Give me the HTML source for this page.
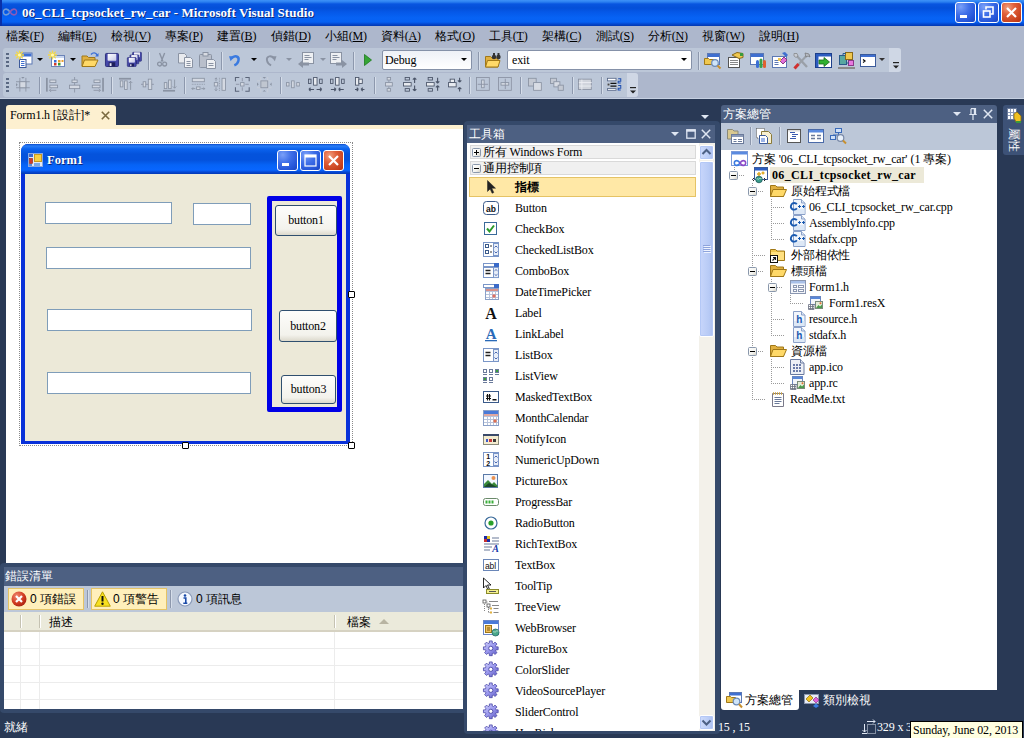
<!DOCTYPE html><html><head><meta charset="utf-8"><title>VS</title><style>
*{box-sizing:border-box}
html,body{margin:0;padding:0;overflow:hidden}
body{width:1024px;height:738px;position:relative;overflow:hidden;background:#293955;font-family:"Liberation Serif",serif;font-size:12px;line-height:14px;color:#000;letter-spacing:-0.15px}
.a{position:absolute}
.t{position:absolute;white-space:nowrap}
svg{position:absolute;overflow:visible}
.sep{position:absolute;width:1px;background:#8d98ad;box-shadow:1px 0 0 #d6deea}
.cap{position:absolute;background:#4d6082;color:#fff;height:18px}
.tb{position:absolute;background:#bcc7d8;border-radius:3px}
.grip{position:absolute;width:3px;height:15px;background:repeating-linear-gradient(#5a6882 0 2px,transparent 2px 4px)}
.txb{position:absolute;background:#fff;border:1px solid #7f9db9}
.btn{position:absolute;border:1px solid #2f4f6f;border-radius:3px;background:linear-gradient(#fdfdfb,#f3f2ec 80%,#dcd9cc);text-align:center}
.hd{position:absolute;width:7px;height:7px;background:#fff;border:1px solid #000;border-radius:1px}
.row{position:absolute;left:469px;width:228px;height:21px}
</style></head><body>
<svg width="0" height="0" style="left:0;top:0"><defs><linearGradient id="gg" x1="0" y1="0" x2="1" y2="1"><stop offset="0" stop-color="#d4d4ff"/><stop offset=".5" stop-color="#9a98ee"/><stop offset="1" stop-color="#5a57c0"/></linearGradient><linearGradient id="pmg" x1="0" y1="0" x2="1" y2="1"><stop offset="0" stop-color="#fff"/><stop offset=".6" stop-color="#f4f4f0"/><stop offset="1" stop-color="#d0ccc0"/></linearGradient></defs></svg>
<div class="a" id="title" style="left:0;top:0;width:1024px;height:26px;background:linear-gradient(#3f92f8 0,#2a7ff0 2px,#0855e0 4px,#044fd8 8px,#0558e8 12px,#0763f5 18px,#0661f2 22px,#0448d0 24px,#0338b0 26px)"></div>
<div class="t" style="left:22px;top:5px;font-weight:bold;font-size:13px;line-height:16px;color:#fff;letter-spacing:0.06px;text-shadow:1px 1px 0 #0a2a80">06_CLI_tcpsocket_rw_car - Microsoft Visual Studio</div>
<div class="a" style="left:955px;top:2px;width:21px;height:21px;border:1px solid #fff;border-radius:3px;background:radial-gradient(circle at 25% 20%,#7aa0f8 0,#3f6fe8 40%,#2555d8 75%,#1a45c0 100%)"><svg style="left:-1px;top:-1px" width="21" height="21"><rect x="5.0" y="13.0" width="7.0" height="3.0" fill="#fff"/></svg></div>
<div class="a" style="left:978px;top:2px;width:21px;height:21px;border:1px solid #fff;border-radius:3px;background:radial-gradient(circle at 25% 20%,#7aa0f8 0,#3f6fe8 40%,#2555d8 75%,#1a45c0 100%)"><svg style="left:-1px;top:-1px" width="21" height="21"><path d="M8.0 7.5V5.0h7.0v7.0h-2.5" fill="none" stroke="#fff" stroke-width="1.6"/><rect x="5.5" y="9.0" width="6.5" height="6.0" fill="none" stroke="#fff" stroke-width="1.6"/></svg></div>
<div class="a" style="left:1001px;top:2px;width:21px;height:21px;border:1px solid #fff;border-radius:3px;background:radial-gradient(circle at 30% 25%,#f0a080 0,#e0603a 35%,#c8421e 75%,#b83010 100%)"><svg style="left:-1px;top:-1px" width="21" height="21"><path d="M6.0 6.0l9.0 9.0M15.0 6.0l-9.0 9.0" stroke="#fff" stroke-width="2.2"/></svg></div>
<svg style="left:2px;top:8px" width="16" height="8" viewBox="0 0 16 8"><path d="M8 4C6 1 4 .8 2.600 1.500 1 2.300 1 5.700 2.600 6.500 4 7.200 6 7 8 4z" fill="none" stroke="#6f9ad8" stroke-width="1.500"/><path d="M8 4C10 1 12 .8 13.400 1.500 15 2.300 15 5.700 13.400 6.500 12 7.200 10 7 8 4z" fill="none" stroke="#8a5ab8" stroke-width="1.500"/></svg>
<div class="a" style="left:0;top:0;width:2px;height:26px;background:#0a30a8"></div>
<div class="a" style="left:0;top:26px;width:1024px;height:73px;background:#adb7cc"></div>
<div class="t" style="left:6px;top:29px">檔案(<u>F</u>)</div>
<div class="t" style="left:58px;top:29px">編輯(<u>E</u>)</div>
<div class="t" style="left:111px;top:29px">檢視(<u>V</u>)</div>
<div class="t" style="left:165px;top:29px">專案(<u>P</u>)</div>
<div class="t" style="left:217px;top:29px">建置(<u>B</u>)</div>
<div class="t" style="left:271px;top:29px">偵錯(<u>D</u>)</div>
<div class="t" style="left:325px;top:29px">小組(<u>M</u>)</div>
<div class="t" style="left:381px;top:29px">資料(<u>A</u>)</div>
<div class="t" style="left:435px;top:29px">格式(<u>O</u>)</div>
<div class="t" style="left:489px;top:29px">工具(<u>T</u>)</div>
<div class="t" style="left:542px;top:29px">架構(<u>C</u>)</div>
<div class="t" style="left:596px;top:29px">測試(<u>S</u>)</div>
<div class="t" style="left:648px;top:29px">分析(<u>N</u>)</div>
<div class="t" style="left:702px;top:29px">視窗(<u>W</u>)</div>
<div class="t" style="left:759px;top:29px">說明(<u>H</u>)</div>
<div class="tb" style="left:3px;top:48px;width:898px;height:24px"></div>
<div class="tb" style="left:3px;top:73px;width:635px;height:24px"></div><div class="a" style="left:0;top:98px;width:1024px;height:1px;background:#c6d0e1"></div>
<div class="a" style="left:889px;top:48px;width:12px;height:24px;background:#cfd7e5;border-radius:0 3px 3px 0"></div><div class="a" style="left:627px;top:73px;width:11px;height:24px;background:#cfd7e5;border-radius:0 3px 3px 0"></div>
<div class="grip" style="left:6px;top:53px"></div><div class="grip" style="left:6px;top:78px"></div>
<div class="a" style="left:382px;top:50px;width:90px;height:20px;background:linear-gradient(#eef1f7,#fff);border:1px solid #8591a8;border-radius:2px"></div><div class="t" style="left:385px;top:53px">Debug</div>
<div class="a" style="left:507px;top:50px;width:185px;height:20px;background:#fff;border:1px solid #8591a8;border-radius:2px"></div><div class="t" style="left:512px;top:53px">exit</div>
<svg style="left:16px;top:51px" width="17" height="17" viewBox="0 0 17 17" ><rect x="4" y="2" width="12" height="11" fill="#fff" stroke="#5b78b4"/><rect x="4.5" y="2.5" width="11" height="3" fill="#3f6fd0"/><rect x="3.500" y="8.500" width="6.500" height="8" fill="#fff" stroke="#3d5a9a"/><path d="M5 10.500h3.500M5 12.500h3.500M5 14.500h3.500" stroke="#3f6fd0"/><g transform="translate(-1,-.5)"><path d="M4.500 0v9M0 4.500h9M1.300 1.300l6.400 6.400M7.700 1.300L1.300 7.700" stroke="#f2d84a" stroke-width="1.300"/><circle cx="4.500" cy="4.500" r="1.600" fill="#fff8b0"/></g></svg>
<svg style="left:37px;top:58px" width="6" height="3" viewBox="0 0 6 3" ><path d="M0 0h6L3 3z" fill="#000"/></svg>
<svg style="left:49px;top:51px" width="17" height="17" viewBox="0 0 17 17" ><rect x="2.5" y="4.5" width="13" height="11" fill="#fff" stroke="#6b84b8"/><rect x="3" y="5" width="12" height="2" fill="#c9d7f0"/><rect x="5" y="9" width="2.5" height="2.5" fill="#3b6fd6"/><rect x="9" y="9" width="2.5" height="2.5" fill="#e8a030"/><rect x="5" y="12" width="2.5" height="2.5" fill="#d03a2a"/><rect x="9" y="12" width="2.5" height="2.5" fill="#2f9a3a"/><rect x="12.5" y="9" width="2" height="2" fill="#e8a030"/><g transform="translate(-1,-.5)"><path d="M4.500 0v9M0 4.500h9M1.300 1.300l6.400 6.400M7.700 1.300L1.300 7.700" stroke="#f2d84a" stroke-width="1.300"/><circle cx="4.500" cy="4.500" r="1.600" fill="#fff8b0"/></g></svg>
<svg style="left:70px;top:58px" width="6" height="3" viewBox="0 0 6 3" ><path d="M0 0h6L3 3z" fill="#000"/></svg>
<svg style="left:81px;top:51px" width="18" height="17" viewBox="0 0 18 17" ><path d="M1 5h5l1.5 1.5H14V15H1z" fill="#e0b040" stroke="#a07818"/><path d="M3.5 9H17l-3 6.5H1z" fill="#ffd968" stroke="#a07818"/><path d="M10 3.5c2-2.5 5-2 6 .5" fill="none" stroke="#3b6fd6" stroke-width="1.4"/><path d="M17.5 2v3.5H14z" fill="#3b6fd6"/></svg>
<svg style="left:105px;top:53px" width="13.95" height="13.95" viewBox="0 0 15 15" ><defs><linearGradient id="fg" x1="0" y1="0" x2="1" y2="1"><stop offset="0" stop-color="#fff"/><stop offset="1" stop-color="#c8cbe8"/></linearGradient></defs><rect x="0.5" y="0.5" width="14" height="14" rx="1" fill="#4447a8" stroke="#2a2c78"/><rect x="3" y="1" width="9" height="7" fill="#fff"/><rect x="3" y="1" width="9" height="7" fill="url(#fg)"/><rect x="4" y="10" width="7" height="4.5" fill="#1e1f5a"/><rect x="5" y="11" width="2" height="3" fill="#e8e8f8"/></svg>
<svg style="left:127px;top:52px" width="14.96" height="14.96" viewBox="0 0 17 17" ><g transform="translate(6,0) scale(.72)"><rect x="0.5" y="0.5" width="14" height="14" rx="1" fill="#4447a8" stroke="#2a2c78"/><rect x="3" y="1" width="9" height="7" fill="#fff"/><rect x="3" y="1" width="9" height="7" fill="url(#fg)"/><rect x="4" y="10" width="7" height="4.5" fill="#1e1f5a"/><rect x="5" y="11" width="2" height="3" fill="#e8e8f8"/></g><g transform="translate(3,3) scale(.72)"><rect x="0.5" y="0.5" width="14" height="14" rx="1" fill="#4447a8" stroke="#2a2c78"/><rect x="3" y="1" width="9" height="7" fill="#fff"/><rect x="3" y="1" width="9" height="7" fill="url(#fg)"/><rect x="4" y="10" width="7" height="4.5" fill="#1e1f5a"/><rect x="5" y="11" width="2" height="3" fill="#e8e8f8"/></g><g transform="translate(0,6) scale(.72)"><rect x="0.5" y="0.5" width="14" height="14" rx="1" fill="#4447a8" stroke="#2a2c78"/><rect x="3" y="1" width="9" height="7" fill="#fff"/><rect x="3" y="1" width="9" height="7" fill="url(#fg)"/><rect x="4" y="10" width="7" height="4.5" fill="#1e1f5a"/><rect x="5" y="11" width="2" height="3" fill="#e8e8f8"/></g></svg>
<div class="sep" style="left:148px;top:52px;height:18px"></div>
<svg style="left:157px;top:53px" width="10.2" height="14.45" viewBox="0 0 12 17" ><path d="M3 0l4 10M9 0L5 10" stroke="#8a93a3" stroke-width="1.6" fill="none"/><circle cx="3" cy="13" r="2.3" fill="none" stroke="#8a93a3" stroke-width="1.5"/><circle cx="9" cy="13" r="2.3" fill="none" stroke="#8a93a3" stroke-width="1.5"/></svg>
<svg style="left:178px;top:53px" width="15" height="15" viewBox="0 0 15 15" ><path d="M.5 .5h6l2 2V10H.5z" fill="#e8eaee" stroke="#8a93a3"/><path d="M6.5 4.5h6l2 2V14.5H6.5z" fill="#f2f3f6" stroke="#8a93a3"/><path d="M8.5 8.5h4M8.5 10.5h4M8.5 12.5h4" stroke="#8a93a3"/></svg>
<svg style="left:199px;top:52px" width="17" height="17" viewBox="0 0 17 17" ><rect x=".5" y="2.5" width="12" height="13" rx="1" fill="#b9bfcb" stroke="#8a93a3"/><rect x="4" y=".5" width="5" height="3.5" fill="#d8dbe2" stroke="#8a93a3"/><path d="M7.5 7.5h7l2 2v7H7.5z" fill="#eef0f3" stroke="#8a93a3"/><path d="M9.5 11.5h5M9.5 13.5h5" stroke="#8a93a3"/></svg>
<div class="sep" style="left:221px;top:52px;height:18px"></div>
<svg style="left:229px;top:53px" width="11.48" height="13.94" viewBox="0 0 14 17" ><path d="M3 6.5C7 2 13 4 11.5 9.5 11 12 9 14 6.5 15" fill="none" stroke="#3a7ae0" stroke-width="3"/><path d="M0 4l6.5 0L2 10z" fill="#3a7ae0"/></svg>
<svg style="left:251px;top:58px" width="6" height="3" viewBox="0 0 6 3" ><path d="M0 0h6L3 3z" fill="#000"/></svg>
<svg style="left:265px;top:53px" width="11.48" height="13.94" viewBox="0 0 14 17" ><path d="M11 6.5C7 2 1 4 2.5 9.5 3 12 5 14 7.5 15" fill="none" stroke="#8a93a3" stroke-width="2.2"/><path d="M14 4l-6.5 0L12 10z" fill="#8a93a3"/></svg>
<svg style="left:286px;top:58px" width="6" height="3" viewBox="0 0 6 3" ><path d="M0 0h6L3 3z" fill="#8a93a3"/></svg>
<svg style="left:298px;top:52px" width="17" height="17" viewBox="0 0 17 17" ><rect x="4.5" y=".5" width="11" height="11" fill="#eef0f3" stroke="#8a93a3"/><path d="M6.5 3.5h5M6.5 5.5h7M6.5 7.5h4" stroke="#8a93a3"/><path d="M0 12l5-4v2.5h6v3H5V16z" fill="#8a93a3"/></svg>
<svg style="left:320px;top:58px" width="6" height="3" viewBox="0 0 6 3" ><path d="M0 0h6L3 3z" fill="#8a93a3"/></svg>
<svg style="left:330px;top:52px" width="17" height="17" viewBox="0 0 17 17" ><rect x=".5" y=".5" width="11" height="11" fill="#eef0f3" stroke="#8a93a3"/><path d="M2.5 3.5h5M2.5 5.5h7M2.5 7.5h4" stroke="#8a93a3"/><path d="M17 12l-5-4v2.5H6v3h6V16z" fill="#8a93a3"/></svg>
<div class="sep" style="left:353px;top:52px;height:18px"></div>
<svg style="left:364px;top:54px" width="8" height="12" viewBox="0 0 8 12" ><path d="M.5 .5l7 5.500-7 5.500z" fill="#35a535" stroke="#1d7a1d" stroke-width=".8"/></svg>
<svg style="left:461px;top:58px" width="6" height="3" viewBox="0 0 6 3" ><path d="M0 0h6L3 3z" fill="#000"/></svg>
<div class="sep" style="left:478px;top:52px;height:18px"></div>
<svg style="left:485px;top:52px" width="17" height="17" viewBox="0 0 17 17" ><path d="M.5 4.5h5l1.5 1.5H13V15H.5z" fill="#e0b040" stroke="#a07818"/><path d="M2.5 8.500H15l-2 6.5H.5z" fill="#ffd968" stroke="#a07818"/><circle cx="9" cy="5" r="2.2" fill="#333"/><circle cx="13.5" cy="5" r="2.2" fill="#333"/><rect x="8" y="1" width="2" height="4" fill="#333"/><rect x="12.5" y="1" width="2" height="4" fill="#333"/></svg>
<svg style="left:681px;top:58px" width="6" height="3" viewBox="0 0 6 3" ><path d="M0 0h6L3 3z" fill="#000"/></svg>
<div class="sep" style="left:698px;top:52px;height:18px"></div>
<svg style="left:704px;top:52px" width="18" height="18" viewBox="0 0 18 18" ><rect x="3.5" y="1.500" width="12" height="11" fill="#fff" stroke="#5b78b4"/><rect x="4" y="2" width="11" height="3" fill="#3f6fd0"/><path d="M.5 6.5h4l1 1h4v5h-9z" fill="#f0c850" stroke="#a07818"/><circle cx="11" cy="11" r="3.3" fill="#cfe4f8" stroke="#6a8ab8" stroke-width="1.2"/><path d="M13.500 13.500l3 3" stroke="#c89030" stroke-width="2"/></svg>
<svg style="left:727px;top:52px" width="17" height="17" viewBox="0 0 17 17" ><rect x="1.5" y="5.5" width="11" height="10" fill="#fff" stroke="#555"/><path d="M3 8.500h8M3 10.500h8M3 12.500h8" stroke="#888"/><path d="M5 3l5-2.500 6 1v4l-4 1-3-1.500z" fill="#f0c850" stroke="#8a6a18"/><rect x="13" y="1" width="3" height="3" fill="#3a9a3a"/></svg>
<svg style="left:749px;top:52px" width="18" height="18" viewBox="0 0 18 18" ><rect x="1.5" y="1.500" width="13" height="11" fill="#fff" stroke="#5b78b4"/><rect x="2" y="2" width="12" height="3" fill="#3f6fd0"/><rect x="7" y="8" width="3" height="8" rx="1.500" fill="#3b6fd6"/><rect x="10.500" y="6.500" width="3" height="9.500" rx="1.500" fill="#39a047"/><rect x="14" y="8" width="3" height="8" rx="1.500" fill="#e06030"/></svg>
<svg style="left:772px;top:52px" width="17" height="17" viewBox="0 0 17 17" ><rect x=".5" y="4.500" width="14" height="11" fill="#fff" stroke="#5b78b4"/><path d="M2.500 8.500h4M2.500 10.500h4M2.500 12.500h4" stroke="#5b78b4"/><path d="M8 9l4-4 3 3-4 4z" fill="#e070d8" stroke="#8a3a88"/><path d="M10 1l3-1 3 3-2 2z" fill="#3f6fd0"/><rect x="6" y="6" width="3" height="3" fill="#f0c850"/></svg>
<svg style="left:793px;top:52px" width="18" height="18" viewBox="0 0 18 18" ><path d="M2 2l12 13" stroke="#9aa0a8" stroke-width="2.400"/><path d="M1 1.500l3 0 1 2.500-2 1.500-2-1.500z" fill="#c8ccd4" stroke="#777" stroke-width=".6"/><path d="M15 2L5 13" stroke="#9aa0a8" stroke-width="2"/><path d="M5.500 12l-4 4.500" stroke="#d03030" stroke-width="3"/><path d="M12 1l4 1 1 3-2-1-2 1z" fill="#b8bcc4" stroke="#666" stroke-width=".6"/></svg>
<svg style="left:815px;top:53px" width="17" height="16" viewBox="0 0 17 16" ><rect x=".5" y=".5" width="16" height="14" fill="#fff" stroke="#1d3f8a"/><rect x="1" y="1" width="15" height="2.500" fill="#2c5cc0"/><rect x="1" y="3" width="2.500" height="11" fill="#2c5cc0"/><path d="M4 7h5V4.500l5.500 4.500-5.500 4.500V11H4z" fill="#2fb02f" stroke="#1a6a1a" stroke-width=".8"/></svg>
<svg style="left:838px;top:52px" width="17" height="18" viewBox="0 0 17 18" ><rect x="1.500" y="3.500" width="7" height="9" fill="#58a8a0" stroke="#2a5a8a"/><rect x="7.500" y=".5" width="7" height="7" fill="#f0c850" stroke="#8a6a18"/><rect x="10.500" y="8.500" width="5" height="5" fill="#e878e0" stroke="#8a3a88"/><path d="M5 3V1.500h3M9 11h2" stroke="#2a5a8a" fill="none"/><rect x="0" y="15" width="17" height="2" fill="#8a8a8a"/></svg>
<svg style="left:860px;top:54px" width="16" height="13" viewBox="0 0 16 13" ><rect x=".5" y=".5" width="15" height="12" fill="#fff" stroke="#3a5a9a"/><rect x="1" y="1" width="14" height="2" fill="#3f6fd0"/><path d="M3 5.500l2 1.500-2 1.500" fill="none" stroke="#000" stroke-width="1.200"/></svg>
<svg style="left:879px;top:58px" width="6" height="3" viewBox="0 0 6 3" ><path d="M0 0h6L3 3z" fill="#333"/></svg>
<svg style="left:893px;top:62px" width="6" height="7" viewBox="0 0 6 7" ><rect x="0" y="0" width="6" height="1.200" fill="#222"/><path d="M0 3.500h6L3 6.500z" fill="#222"/></svg>
<svg style="left:16px;top:77px" width="13.76" height="15.48" viewBox="0 0 16 18" ><path d="M4.500 1v16M11.500 1v16M0 5.500h16M0 12.500h16" stroke="#8a93a3"/><rect x="4.5" y="5.5" width="7" height="7" fill="#d4d9e2" stroke="#8a93a3"/><path d="M6 0h4l-2 2zM0 7v4l2-2z" fill="#8a93a3"/></svg>
<div class="sep" style="left:39px;top:77px;height:17px"></div>
<svg style="left:46px;top:77px" width="12.9" height="15.48" viewBox="0 0 15 18" ><rect x="0" y="1" width="2" height="16" fill="#8a93a3"/><rect x="4.5" y="3.5" width="7" height="3" fill="#d4d9e2" stroke="#8a93a3"/><rect x="4.5" y="9.5" width="9" height="3" fill="#d4d9e2" stroke="#8a93a3"/><path d="M4 15.500h8M4 15.500l2-2M4 15.500l2 2" stroke="#8a93a3" fill="none"/></svg>
<svg style="left:69px;top:77px" width="11.18" height="15.48" viewBox="0 0 13 18" ><path d="M6.500 0v18" stroke="#8a93a3"/><rect x="3.5" y="3.5" width="6" height="3" fill="#d4d9e2" stroke="#8a93a3"/><rect x="0.5" y="9.5" width="12" height="4" fill="#d4d9e2" stroke="#8a93a3"/></svg>
<svg style="left:91px;top:77px" width="12.9" height="15.48" viewBox="0 0 15 18" ><rect x="13" y="1" width="2" height="16" fill="#8a93a3"/><rect x="3.5" y="3.5" width="7" height="3" fill="#d4d9e2" stroke="#8a93a3"/><rect x="1.5" y="9.5" width="9" height="3" fill="#d4d9e2" stroke="#8a93a3"/><path d="M3 15.500h8M11 15.500l-2-2M11 15.500l-2 2" stroke="#8a93a3" fill="none"/></svg>
<div class="sep" style="left:111px;top:77px;height:17px"></div>
<svg style="left:119px;top:77px" width="13.76" height="15.48" viewBox="0 0 16 18" ><rect x="0" y="1" width="14" height="2" fill="#8a93a3"/><rect x="1.5" y="4.5" width="3" height="7" fill="#d4d9e2" stroke="#8a93a3"/><rect x="6.5" y="4.5" width="3" height="10" fill="#d4d9e2" stroke="#8a93a3"/><path d="M13.500 15V5M13.500 5l-2 2M13.500 5l2 2" stroke="#8a93a3" fill="none"/></svg>
<svg style="left:141px;top:77px" width="12.9" height="15.48" viewBox="0 0 15 18" ><path d="M0 8.500h15" stroke="#8a93a3"/><rect x="2.5" y="5.5" width="3" height="6" fill="#d4d9e2" stroke="#8a93a3"/><rect x="8.5" y="2.5" width="4" height="12" fill="#d4d9e2" stroke="#8a93a3"/></svg>
<svg style="left:163px;top:77px" width="13.76" height="15.48" viewBox="0 0 16 18" ><rect x="0" y="15" width="14" height="2" fill="#8a93a3"/><rect x="1.5" y="6.5" width="3" height="7" fill="#d4d9e2" stroke="#8a93a3"/><rect x="6.5" y="3.5" width="3" height="10" fill="#d4d9e2" stroke="#8a93a3"/><path d="M13.500 3v10M13.500 13l-2-2M13.500 13l2-2" stroke="#8a93a3" fill="none"/></svg>
<div class="sep" style="left:184px;top:77px;height:17px"></div>
<svg style="left:191px;top:77px" width="14.62" height="15.48" viewBox="0 0 17 18" ><rect x="1.5" y="1.5" width="14" height="4" fill="#d4d9e2" stroke="#8a93a3"/><path d="M1 8.500h15" stroke="#8a93a3" stroke-dasharray="1 1"/><rect x="6.5" y="11.5" width="4" height="3" fill="#d4d9e2" stroke="#8a93a3"/><path d="M1 13.500h4M1 13.500l1.500-1.500M1 13.500l1.500 1.500M16 13.500h-4M16 13.500l-1.500-1.500M16 13.500l-1.500 1.500" stroke="#8a93a3" fill="none"/></svg>
<svg style="left:213px;top:77px" width="13.76" height="15.48" viewBox="0 0 16 18" ><rect x="10.5" y="1.5" width="4" height="14" fill="#d4d9e2" stroke="#8a93a3"/><path d="M7.500 1v15" stroke="#8a93a3" stroke-dasharray="1 1"/><rect x="1.5" y="6.5" width="4" height="4" fill="#d4d9e2" stroke="#8a93a3"/><path d="M3.500 1v4M3.500 1l-1.500 1.500M3.500 1l1.500 1.500M3.500 16v-4M3.500 16l-1.500-1.500M3.500 16l1.500-1.500" stroke="#8a93a3" fill="none"/></svg>
<svg style="left:235px;top:77px" width="14.62" height="15.48" viewBox="0 0 17 18" ><path d="M.5 5V.5H5M12 .5h4.500V5M16.500 12v4.500H12M5 16.500H.5V12" stroke="#5a6478" fill="none" stroke-width="1.200"/><rect x="6.5" y="6.5" width="4" height="4" fill="#d4d9e2" stroke="#8a93a3"/><path d="M8.500 1v4M8.500 16v-4M1 8.500h4M16 8.500h-4" stroke="#8a93a3"/></svg>
<svg style="left:257px;top:77px" width="14.62" height="15.48" viewBox="0 0 17 18" ><path d="M4.500 0v18M12.500 0v18M0 4.500h17M0 12.500h17" stroke="#c9ced8"/><rect x="4.500" y="4.500" width="8" height="8" fill="#c0c6d0" stroke="#8a93a3"/><path d="M6.500 0h4l-2 2zM6.500 17h4l-2-2zM0 6.500v4l2-2zM17 6.500v4l-2-2z" fill="#8a93a3"/></svg>
<div class="sep" style="left:280px;top:77px;height:17px"></div>
<svg style="left:286px;top:77px" width="14.62" height="15.48" viewBox="0 0 17 18" ><path d="M0 8.500h17" stroke="#c9ced8"/><rect x="0.5" y="6.5" width="3" height="4" fill="#d4d9e2" stroke="#8a93a3"/><rect x="6.5" y="4.5" width="3" height="8" fill="#d4d9e2" stroke="#8a93a3"/><rect x="12.5" y="6.5" width="3" height="4" fill="#d4d9e2" stroke="#8a93a3"/></svg>
<svg style="left:308px;top:77px" width="14.62" height="15.48" viewBox="0 0 17 18" ><rect x=".5" y="2.500" width="3" height="5" fill="none" stroke="#4a5468"/><rect x="6.500" y=".5" width="4" height="9" fill="#e8ebf0" stroke="#4a5468"/><rect x="13.500" y="2.500" width="3" height="5" fill="none" stroke="#4a5468"/><path d="M1 14.500h6M10 14.500h6M1 14.500l2-2M1 14.500l2 2M16 14.500l-2-2M16 14.500l-2 2" stroke="#4a5468" stroke-width="1.300" fill="none"/></svg>
<svg style="left:330px;top:77px" width="14.62" height="15.48" viewBox="0 0 17 18" ><rect x=".5" y="2.500" width="3" height="5" fill="none" stroke="#4a5468"/><rect x="6.500" y=".5" width="4" height="9" fill="#e8ebf0" stroke="#4a5468"/><rect x="13.500" y="2.500" width="3" height="5" fill="none" stroke="#4a5468"/><path d="M1 14.500h6M10 14.500h6M7 14.500l-2-2M7 14.500l-2 2M10 14.500l2-2M10 14.500l2 2" stroke="#4a5468" stroke-width="1.300" fill="none"/></svg>
<svg style="left:355px;top:77px" width="10.32" height="15.48" viewBox="0 0 12 18" ><rect x=".5" y=".5" width="4" height="9" fill="#e8ebf0" stroke="#4a5468"/><rect x="4.500" y="2.500" width="4" height="5" fill="#e8ebf0" stroke="#4a5468"/><path d="M0 14.500h4M7 14.500h4M4 14.500l-2-2M4 14.500l-2 2M7 14.500l2-2M7 14.500l2 2" stroke="#4a5468" stroke-width="1.300" fill="none"/></svg>
<div class="sep" style="left:374px;top:77px;height:17px"></div>
<svg style="left:385px;top:77px" width="7.74" height="15.48" viewBox="0 0 9 18" ><rect x="2.5" y="0.5" width="4" height="3" fill="#d4d9e2" stroke="#8a93a3"/><rect x="0.5" y="6.5" width="8" height="4" fill="#d4d9e2" stroke="#8a93a3"/><rect x="2.5" y="13.5" width="4" height="3" fill="#d4d9e2" stroke="#8a93a3"/><path d="M4.500 4v2M4.500 11v2" stroke="#8a93a3"/></svg>
<svg style="left:403px;top:77px" width="13.76" height="15.48" viewBox="0 0 16 18" ><rect x="2.500" y=".5" width="5" height="3" fill="none" stroke="#4a5468"/><rect x=".5" y="6.500" width="9" height="4" fill="#e8ebf0" stroke="#4a5468"/><rect x="2.500" y="13.500" width="5" height="3" fill="none" stroke="#4a5468"/><path d="M13.500 1v6M13.500 10v6M13.500 1l-2 2M13.500 1l2 2M13.500 16l-2-2M13.500 16l2-2" stroke="#4a5468" stroke-width="1.300" fill="none"/></svg>
<svg style="left:426px;top:77px" width="13.76" height="15.48" viewBox="0 0 16 18" ><rect x="2.500" y=".5" width="5" height="3" fill="none" stroke="#4a5468"/><rect x=".5" y="6.500" width="9" height="4" fill="#e8ebf0" stroke="#4a5468"/><rect x="2.500" y="13.500" width="5" height="3" fill="none" stroke="#4a5468"/><path d="M13.500 1v6M13.500 10v6M13.500 7l-2-2M13.500 7l2-2M13.500 10l-2 2M13.500 10l2 2" stroke="#4a5468" stroke-width="1.300" fill="none"/></svg>
<svg style="left:448px;top:77px" width="13.76" height="15.48" viewBox="0 0 16 18" ><rect x="2.500" y="2.500" width="5" height="4" fill="#e8ebf0" stroke="#4a5468"/><rect x=".5" y="6.500" width="9" height="5" fill="#e8ebf0" stroke="#4a5468"/><path d="M13.500 1v5M13.500 12v5M13.500 6l-2-2M13.500 6l2-2M13.500 12l-2 2M13.500 12l2 2" stroke="#4a5468" stroke-width="1.300" fill="none"/></svg>
<div class="sep" style="left:469px;top:77px;height:17px"></div>
<svg style="left:476px;top:77px" width="14.62" height="15.48" viewBox="0 0 17 18" ><rect x=".5" y=".5" width="15" height="15" fill="none" stroke="#8a93a3"/><rect x="6.500" y="3.500" width="3" height="9" fill="#d4d9e2" stroke="#8a93a3"/><path d="M2 8.500h12" stroke="#8a93a3"/></svg>
<svg style="left:498px;top:77px" width="14.62" height="15.48" viewBox="0 0 17 18" ><rect x=".5" y=".5" width="15" height="15" fill="none" stroke="#8a93a3"/><rect x="3.500" y="6.500" width="9" height="3" fill="#d4d9e2" stroke="#8a93a3"/><path d="M8.500 2v12" stroke="#8a93a3"/></svg>
<div class="sep" style="left:520px;top:77px;height:17px"></div>
<svg style="left:528px;top:77px" width="14.62" height="15.48" viewBox="0 0 17 18" ><rect x=".5" y="1.500" width="9" height="9" fill="#c4c9d3" stroke="#8a93a3"/><rect x="6.500" y="6.500" width="9" height="9" fill="#d8dce4" stroke="#8a93a3"/></svg>
<svg style="left:550px;top:77px" width="14.62" height="15.48" viewBox="0 0 17 18" ><rect x=".5" y="1.500" width="7" height="6" fill="#c4c9d3" stroke="#8a93a3"/><rect x="4.500" y="5.500" width="7" height="6" fill="#d8dce4" stroke="#8a93a3"/><rect x="9.500" y="9.500" width="6" height="6" fill="#c4c9d3" stroke="#8a93a3"/></svg>
<div class="sep" style="left:572px;top:77px;height:17px"></div>
<svg style="left:578px;top:77px" width="14.62" height="15.48" viewBox="0 0 17 18" ><rect x=".5" y="2.500" width="15" height="12" fill="#d0d4dc" stroke="#8a93a3"/><path d="M1 6.500h15M1 10.500h15M4.500 3v12" stroke="#eef0f4"/></svg>
<div class="sep" style="left:601px;top:77px;height:17px"></div>
<svg style="left:607px;top:77px" width="15.48" height="15.48" viewBox="0 0 18 18" ><rect x=".5" y="1.500" width="10" height="3" fill="#fff" stroke="#5a6a8a"/><rect x="1" y="8" width="2" height="2" fill="#fff" stroke="#333" stroke-width=".6"/><path d="M4 7.500h7M4 10.500h7" stroke="#111" stroke-width="1.400"/><rect x=".5" y="13.500" width="10" height="2" fill="#fff" stroke="#5a6a8a"/><path d="M13 2h3v3h-3v2h3M13 10h3v3h-3v2h3" stroke="#2050b0" fill="none" stroke-width="1.200"/></svg>
<svg style="left:630px;top:87px" width="6" height="7" viewBox="0 0 6 7" ><rect x="0" y="0" width="6" height="1.200" fill="#222"/><path d="M0 3.500h6L3 6.500z" fill="#222"/></svg>
<div class="a" style="left:6px;top:105px;width:110px;height:21px;background:#fdf0d0;border-radius:3px 3px 0 0"></div>
<div class="a" style="left:6px;top:125px;width:457px;height:4px;background:#fdf0d0"></div>
<div class="t" style="left:10px;top:108px">Form1.h [設計]*</div>
<div class="a" style="left:6px;top:129px;width:457px;height:434px;background:#fff"></div>
<div class="a" style="left:19px;top:142px;width:334px;height:304px;border:1px dotted #8a8a8a"></div>
<div class="a" id="form" style="left:21px;top:144px;width:329px;height:300px;background:#0831d9;border-radius:7px 7px 0 0"></div>
<div class="a" style="left:21px;top:144px;width:329px;height:30px;border-radius:7px 7px 0 0;background:linear-gradient(#0a4ccc 0,#2a7ef6 2px,#0a62ee 5px,#0453dc 10px,#0452dc 16px,#0663f6 21px,#0866ff 26px,#0548d4 28px,#0338b4 30px)"></div>
<div class="a" style="left:25px;top:174px;width:321px;height:267px;background:#ece9d8"></div>
<div class="t" style="left:47px;top:152px;font-weight:bold;font-size:12.500px;line-height:16px;color:#fff;letter-spacing:0;text-shadow:1px 1px 0 #0a2a80">Form1</div>
<div class="a" style="left:277px;top:150px;width:21px;height:21px;border:1px solid #fff;border-radius:3px;background:radial-gradient(circle at 25% 20%,#7aa0f8 0,#3f6fe8 40%,#2555d8 75%,#1a45c0 100%)"><svg style="left:-1px;top:-1px" width="21" height="21"><rect x="5.0" y="13.0" width="7.0" height="3.0" fill="#fff"/></svg></div>
<div class="a" style="left:300px;top:150px;width:21px;height:21px;border:1px solid #fff;border-radius:3px;background:radial-gradient(circle at 25% 20%,#7aa0f8 0,#3f6fe8 40%,#2555d8 75%,#1a45c0 100%)"><svg style="left:-1px;top:-1px" width="21" height="21"><rect x="5.0" y="5.0" width="11.0" height="11.0" fill="none" stroke="#fff" stroke-width="1.2"/><rect x="5.0" y="5.0" width="11.0" height="2.5" fill="#fff"/></svg></div>
<div class="a" style="left:323px;top:150px;width:21px;height:21px;border:1px solid #fff;border-radius:3px;background:radial-gradient(circle at 30% 25%,#f0a080 0,#e0603a 35%,#c8421e 75%,#b83010 100%)"><svg style="left:-1px;top:-1px" width="21" height="21"><path d="M6.0 6.0l9.0 9.0M15.0 6.0l-9.0 9.0" stroke="#fff" stroke-width="2.2"/></svg></div>
<svg style="left:28px;top:153px" width="15" height="14" viewBox="0 0 15 14" ><rect x=".5" y=".5" width="14" height="13" fill="#dfe8f8" stroke="#8aa8e0"/><rect x="1" y="1" width="4" height="3" fill="#3a6ad0"/><rect x="6.500" y="1.500" width="7" height="7" fill="#f8d040" stroke="#c89a20"/><rect x="1.500" y="5.500" width="3" height="5" fill="#d03a2a" stroke="#8a2010" stroke-width=".6"/><rect x="6" y="10" width="6" height="3" fill="#7aa8e8"/><rect x="1" y="11" width="3" height="2" fill="#5a8ad8"/></svg>
<div class="txb" style="left:45px;top:202px;width:127px;height:22px"></div>
<div class="txb" style="left:193px;top:203px;width:58px;height:22px"></div>
<div class="txb" style="left:46px;top:247px;width:205px;height:22px"></div>
<div class="txb" style="left:47px;top:309px;width:205px;height:22px"></div>
<div class="txb" style="left:47px;top:372px;width:204px;height:22px"></div>
<div class="a" style="left:267px;top:196px;width:75px;height:216px;border:5px solid #0000e6;border-radius:2px"></div>
<div class="btn" style="left:275px;top:205px;width:62px;height:31px;line-height:28px">button1</div>
<div class="btn" style="left:279px;top:310px;width:58px;height:32px;line-height:31px">button2</div>
<div class="btn" style="left:281px;top:375px;width:55px;height:29px;line-height:26px">button3</div>
<div class="hd" style="left:348px;top:291px"></div>
<div class="hd" style="left:182px;top:442px"></div>
<div class="hd" style="left:348px;top:442px"></div>
<div class="a" style="left:464px;top:121px;width:256px;height:613px;background:#35496a;border-radius:4px"></div>
<div class="cap" style="left:467px;top:125px;width:248px"></div><div class="t" style="left:469px;top:127px;color:#fff">工具箱</div>
<div class="a" style="left:467px;top:143px;width:248px;height:588px;background:#fff"></div>
<div class="a" style="left:470px;top:145px;width:226px;height:14px;background:#f0f0f0;border:1px solid #d9d9d9"></div>
<div class="a" style="left:470px;top:161px;width:226px;height:14px;background:#f0f0f0;border:1px solid #d9d9d9"></div>
<div class="t" style="left:483px;top:145px">所有 Windows Form</div><div class="t" style="left:483px;top:161px">通用控制項</div>
<div class="a" style="left:469px;top:177px;width:227px;height:20px;background:#ffe8a6;border:1px solid #e5c365"></div>
<div class="a" style="left:467px;top:143px;width:232px;height:588px;overflow:hidden">
<div class="t" style="left:48px;top:37px;font-weight:bold">指標</div>
<svg style="left:16px;top:36px" width="16" height="16" viewBox="0 0 16 16" ><path d="M4.500 1.500v11l2.600-2.600 2 4.400 1.700-.8-2-4.300H12.500z" fill="#222" stroke="#222" stroke-width=".5"/></svg>
<div class="t" style="left:48px;top:58px">Button</div>
<svg style="left:16px;top:57px" width="16" height="16" viewBox="0 0 16 16" ><rect x=".5" y="1.500" width="15" height="13" rx="3" fill="#fff" stroke="#3a5a8a"/><text x="8" y="11.500" font-family="Liberation Sans,sans-serif" font-size="8.500" font-weight="bold" text-anchor="middle" fill="#111" letter-spacing="0">ab</text></svg>
<div class="t" style="left:48px;top:79px">CheckBox</div>
<svg style="left:16px;top:78px" width="16" height="16" viewBox="0 0 16 16" ><rect x="1.500" y="1.500" width="12" height="12" fill="#fff" stroke="#3a6a9a"/><path d="M4 7.500l2.500 3L11 4.500" fill="none" stroke="#2a9a2a" stroke-width="2"/></svg>
<div class="t" style="left:48px;top:100px">CheckedListBox</div>
<svg style="left:16px;top:99px" width="16" height="16" viewBox="0 0 16 16" ><rect x=".5" y=".5" width="15" height="14" fill="#fff" stroke="#7a96c8"/><rect x="2.500" y="2.500" width="3" height="3" fill="none" stroke="#3a5a8a"/><rect x="2.500" y="8.500" width="3" height="3" fill="none" stroke="#3a5a8a"/><path d="M7 4h2M7 10h2" stroke="#333"/><g transform="translate(0,1)"><rect x="10.500" y=".5" width="5" height="12" fill="#e8eef8" stroke="#7a96c8"/><path d="M11.500 4.500l1.500-1.500 1.500 1.500M11.500 8.500l1.500 1.500 1.500-1.500" fill="none" stroke="#3a5aa8" stroke-width=".9"/></g></svg>
<div class="t" style="left:48px;top:121px">ComboBox</div>
<svg style="left:16px;top:120px" width="16" height="16" viewBox="0 0 16 16" ><rect x=".5" y=".5" width="15" height="3" fill="#fff" stroke="#7a96c8"/><rect x="11" y="0" width="5" height="4" fill="#3a6ac8"/><rect x=".5" y="4.500" width="15" height="10" fill="#fff" stroke="#7a96c8"/><path d="M2.500 7.500h5M2.500 10.500h5" stroke="#222" stroke-width="1.500"/><g transform="translate(0,4) scale(1,.85)"><rect x="10.500" y=".5" width="5" height="12" fill="#e8eef8" stroke="#7a96c8"/><path d="M11.500 4.500l1.500-1.500 1.500 1.500M11.500 8.500l1.500 1.500 1.500-1.500" fill="none" stroke="#3a5aa8" stroke-width=".9"/></g></svg>
<div class="t" style="left:48px;top:142px">DateTimePicker</div>
<svg style="left:16px;top:141px" width="16" height="16" viewBox="0 0 16 16" ><rect x=".5" y=".5" width="15" height="3" fill="#fff" stroke="#7a96c8"/><rect x="11" y="0" width="5" height="4" fill="#3a6ac8"/><rect x="2.500" y="4.500" width="13" height="11" fill="#fff" stroke="#8aa0c8"/><path d="M3 7.500h12M3 10.500h12M3 13.500h12M6.500 5v10M9.500 5v10M12.500 5v10" stroke="#b8c4dc"/><rect x="9.500" y="10.500" width="3" height="3" fill="#e07060"/><rect x="3" y="5" width="12" height="2" fill="#d89088"/></svg>
<div class="t" style="left:48px;top:163px">Label</div>
<svg style="left:16px;top:162px" width="16" height="16" viewBox="0 0 16 16" ><text x="8" y="14" font-family="Liberation Serif,serif" font-size="16" font-weight="bold" text-anchor="middle" fill="#111">A</text></svg>
<div class="t" style="left:48px;top:184px">LinkLabel</div>
<svg style="left:16px;top:183px" width="16" height="16" viewBox="0 0 16 16" ><text x="8" y="13" font-family="Liberation Serif,serif" font-size="15" font-weight="bold" text-anchor="middle" fill="#2a6ab8">A</text><rect x="2" y="14" width="12" height="1.300" fill="#2a6ab8"/></svg>
<div class="t" style="left:48px;top:205px">ListBox</div>
<svg style="left:16px;top:204px" width="16" height="16" viewBox="0 0 16 16" ><rect x=".5" y="1.500" width="15" height="13" fill="#fff" stroke="#7a96c8"/><path d="M2.500 5.500h5M2.500 8.500h5" stroke="#222" stroke-width="1.500"/><g transform="translate(0,2)"><rect x="10.500" y=".5" width="5" height="12" fill="#e8eef8" stroke="#7a96c8"/><path d="M11.500 4.500l1.500-1.500 1.500 1.500M11.500 8.500l1.500 1.500 1.500-1.500" fill="none" stroke="#3a5aa8" stroke-width=".9"/></g></svg>
<div class="t" style="left:48px;top:226px">ListView</div>
<svg style="left:16px;top:225px" width="16" height="16" viewBox="0 0 16 16" ><rect x="0.500" y="1.500" width="3" height="3" fill="#fff" stroke="#6a7a9a"/><rect x="0" y="6" width="4" height="1" fill="#6a7a9a"/><rect x="6.500" y="1.500" width="3" height="3" fill="#fff" stroke="#6a7a9a"/><rect x="6" y="6" width="4" height="1" fill="#6a7a9a"/><rect x="12.500" y="1.500" width="3" height="3" fill="#fff" stroke="#6a7a9a"/><rect x="12" y="6" width="4" height="1" fill="#6a7a9a"/><rect x="0.500" y="9.500" width="3" height="3" fill="#fff" stroke="#6a7a9a"/><rect x="0" y="14" width="4" height="1" fill="#6a7a9a"/><rect x="6.500" y="9.500" width="3" height="3" fill="#fff" stroke="#6a7a9a"/><rect x="6" y="14" width="4" height="1" fill="#6a7a9a"/><rect x="13" y="2" width="2" height="2" fill="#3aa03a"/><rect x="1" y="10" width="2" height="2" fill="#3aa03a"/></svg>
<div class="t" style="left:48px;top:247px">MaskedTextBox</div>
<svg style="left:16px;top:246px" width="16" height="16" viewBox="0 0 16 16" ><rect x=".5" y="2.500" width="15" height="11" fill="#fff" stroke="#3a5a8a"/><path d="M3 7h5M3 9.500h5M4.500 5v6.500M6.500 5v6.500" stroke="#111" stroke-width="1.100"/><rect x="9.500" y="10" width="4" height="1.500" fill="#111"/></svg>
<div class="t" style="left:48px;top:268px">MonthCalendar</div>
<svg style="left:16px;top:267px" width="16" height="16" viewBox="0 0 16 16" ><rect x=".5" y=".5" width="15" height="15" fill="#fff" stroke="#8aa0c8"/><rect x="1" y="1" width="14" height="3" fill="#4a7ad8"/><path d="M1 6.500h14M1 9.500h14M1 12.500h14M4.500 4v11M7.500 4v11M10.500 4v11M13.500 4v11" stroke="#b8c4dc"/><rect x="10.500" y="9.500" width="3" height="3" fill="#e07050"/><rect x="1" y="4" width="14" height="2" fill="#e0a8a0"/></svg>
<div class="t" style="left:48px;top:289px">NotifyIcon</div>
<svg style="left:16px;top:288px" width="16" height="16" viewBox="0 0 16 16" ><rect x=".5" y="3.500" width="15" height="10" fill="#f4ecd0" stroke="#8a8a7a"/><rect x="0" y="3" width="16" height="2" fill="#3a4a6a"/><rect x="3" y="8" width="2" height="3" fill="#3a5ac8"/><rect x="6" y="8" width="3" height="3" fill="#c83a3a"/><rect x="10" y="8" width="3" height="3" fill="#3a3a3a"/></svg>
<div class="t" style="left:48px;top:310px">NumericUpDown</div>
<svg style="left:16px;top:309px" width="16" height="16" viewBox="0 0 16 16" ><rect x=".5" y=".5" width="15" height="14" fill="#fff" stroke="#7a96c8"/><text x="5" y="7" font-family="Liberation Sans,sans-serif" font-size="7" font-weight="bold" text-anchor="middle" fill="#111">1</text><text x="5" y="14" font-family="Liberation Sans,sans-serif" font-size="7" font-weight="bold" text-anchor="middle" fill="#111">2</text><g transform="translate(0,1)"><rect x="10.500" y=".5" width="5" height="12" fill="#e8eef8" stroke="#7a96c8"/><path d="M11.500 4.500l1.500-1.500 1.500 1.500M11.500 8.500l1.500 1.500 1.500-1.500" fill="none" stroke="#3a5aa8" stroke-width=".9"/></g></svg>
<div class="t" style="left:48px;top:331px">PictureBox</div>
<svg style="left:16px;top:330px" width="16" height="16" viewBox="0 0 16 16" ><rect x=".5" y="1.500" width="14" height="13" fill="#f2f7ff" stroke="#5a7aa8"/><circle cx="10.500" cy="5" r="2" fill="#e89050"/><path d="M1 14V11l4-4 4 4 2-2 3.500 3.500V14z" fill="#3a8a3a"/><path d="M1 14l5-4 8 4z" fill="#1a4a2a"/></svg>
<div class="t" style="left:48px;top:352px">ProgressBar</div>
<svg style="left:16px;top:351px" width="16" height="16" viewBox="0 0 16 16" ><rect x=".5" y="4.500" width="15" height="7" rx="2" fill="#fff" stroke="#6a8a6a"/><rect x="2.500" y="6.500" width="2" height="3" fill="#3ab03a"/><rect x="5.500" y="6.500" width="2" height="3" fill="#3ab03a"/><rect x="8.500" y="6.500" width="2" height="3" fill="#3ab03a"/></svg>
<div class="t" style="left:48px;top:373px">RadioButton</div>
<svg style="left:16px;top:372px" width="16" height="16" viewBox="0 0 16 16" ><circle cx="8" cy="8" r="6" fill="#fff" stroke="#3a6a9a" stroke-width="1.200"/><circle cx="8" cy="8" r="2.600" fill="#2aa02a"/></svg>
<div class="t" style="left:48px;top:394px">RichTextBox</div>
<svg style="left:16px;top:393px" width="16" height="16" viewBox="0 0 16 16" ><rect x="1" y="0" width="3" height="3" fill="#1a2aa8"/><rect x="4" y="0" width="3" height="3" fill="#e0c020"/><rect x="1" y="3" width="3" height="3" fill="#c83030"/><rect x="4" y="3" width="3" height="3" fill="#1a2aa8"/><path d="M9 2h7M9 5h7M1 8h15M1 11h8M1 14h6" stroke="#6a7a9a" stroke-width="1.200"/><text x="12.500" y="16" font-family="Liberation Serif,serif" font-size="10" font-weight="bold" font-style="italic" text-anchor="middle" fill="#1a3aa8">A</text></svg>
<div class="t" style="left:48px;top:415px">TextBox</div>
<svg style="left:16px;top:414px" width="16" height="16" viewBox="0 0 16 16" ><rect x=".5" y="2.500" width="15" height="11" fill="#fff" stroke="#6a86b8"/><text x="7.500" y="11.500" font-family="Liberation Sans,sans-serif" font-size="8.500" text-anchor="middle" fill="#111">abl</text></svg>
<div class="t" style="left:48px;top:436px">ToolTip</div>
<svg style="left:16px;top:435px" width="16" height="16" viewBox="0 0 16 16" ><path d="M.5 0v10l2.500-2.500 1.800 4 1.500-.7-1.800-3.800H8z" fill="#fff" stroke="#111" stroke-width=".9"/><rect x="3.500" y="11.500" width="12" height="4" fill="#f4f090" stroke="#8a8a2a"/><path d="M6 13.500h7" stroke="#555"/></svg>
<div class="t" style="left:48px;top:457px">TreeView</div>
<svg style="left:16px;top:456px" width="16" height="16" viewBox="0 0 16 16" ><path d="M1.500 3v9M1.500 3h3M5.500 6v7.500M5.500 9.500h2M5.500 13.500h2" stroke="#888" stroke-dasharray="1 1"/><rect x="0" y="1" width="3" height="3" fill="#fff" stroke="#555" stroke-width=".8"/><rect x="4" y="5" width="3" height="3" fill="#fff" stroke="#555" stroke-width=".8"/><rect x="7" y="8.500" width="2" height="2" fill="#e0b040"/><rect x="7" y="12.500" width="2" height="2" fill="#e0b040"/><path d="M6 2.500h9M9 6.500h7M10.500 9.500h5M10.500 13.500h5" stroke="#888"/></svg>
<div class="t" style="left:48px;top:478px">WebBrowser</div>
<svg style="left:16px;top:477px" width="16" height="16" viewBox="0 0 16 16" ><rect x=".5" y=".5" width="15" height="14" fill="#fff" stroke="#6a86c8"/><rect x="1" y="1" width="14" height="3" fill="#4a7ad8"/><rect x="2.500" y="5.500" width="6" height="7" fill="#f0c060" stroke="#a07818"/><path d="M4 8h3M4 10h3" stroke="#805a10"/><circle cx="12.500" cy="12.500" r="3.500" fill="#4aa88a" stroke="#2a6a6a" stroke-width=".8"/><path d="M10 12c1-1 2 1 3-0.500s1.500 0 2.500-.5" fill="none" stroke="#cfe8d8" stroke-width=".8"/></svg>
<div class="t" style="left:48px;top:499px">PictureBox</div>
<svg style="left:16px;top:498px" width="16" height="16" viewBox="0 0 16 16" ><g transform="translate(7.800,7.300)"><path d="M-1.42 -5.31L-1.43 -7.36L1.43 -7.36L1.42 -5.31L2.75 -4.76L4.19 -6.22L6.22 -4.19L4.76 -2.75L5.31 -1.42L7.36 -1.43L7.36 1.43L5.31 1.42L4.76 2.75L6.22 4.19L4.19 6.22L2.75 4.76L1.42 5.31L1.43 7.36L-1.43 7.36L-1.42 5.31L-2.75 4.76L-4.19 6.22L-6.22 4.19L-4.76 2.75L-5.31 1.42L-7.36 1.43L-7.36 -1.43L-5.31 -1.42L-4.76 -2.75L-6.22 -4.19L-4.19 -6.22L-2.75 -4.76z" fill="url(#gg)" stroke="#4a47a6" stroke-width=".8" stroke-linejoin="round"/><circle r="2.100" fill="#fff" stroke="#4a47a6" stroke-width=".9"/></g></svg>
<div class="t" style="left:48px;top:520px">ColorSlider</div>
<svg style="left:16px;top:519px" width="16" height="16" viewBox="0 0 16 16" ><g transform="translate(7.800,7.300)"><path d="M-1.42 -5.31L-1.43 -7.36L1.43 -7.36L1.42 -5.31L2.75 -4.76L4.19 -6.22L6.22 -4.19L4.76 -2.75L5.31 -1.42L7.36 -1.43L7.36 1.43L5.31 1.42L4.76 2.75L6.22 4.19L4.19 6.22L2.75 4.76L1.42 5.31L1.43 7.36L-1.43 7.36L-1.42 5.31L-2.75 4.76L-4.19 6.22L-6.22 4.19L-4.76 2.75L-5.31 1.42L-7.36 1.43L-7.36 -1.43L-5.31 -1.42L-4.76 -2.75L-6.22 -4.19L-4.19 -6.22L-2.75 -4.76z" fill="url(#gg)" stroke="#4a47a6" stroke-width=".8" stroke-linejoin="round"/><circle r="2.100" fill="#fff" stroke="#4a47a6" stroke-width=".9"/></g></svg>
<div class="t" style="left:48px;top:541px">VideoSourcePlayer</div>
<svg style="left:16px;top:540px" width="16" height="16" viewBox="0 0 16 16" ><g transform="translate(7.800,7.300)"><path d="M-1.42 -5.31L-1.43 -7.36L1.43 -7.36L1.42 -5.31L2.75 -4.76L4.19 -6.22L6.22 -4.19L4.76 -2.75L5.31 -1.42L7.36 -1.43L7.36 1.43L5.31 1.42L4.76 2.75L6.22 4.19L4.19 6.22L2.75 4.76L1.42 5.31L1.43 7.36L-1.43 7.36L-1.42 5.31L-2.75 4.76L-4.19 6.22L-6.22 4.19L-4.76 2.75L-5.31 1.42L-7.36 1.43L-7.36 -1.43L-5.31 -1.42L-4.76 -2.75L-6.22 -4.19L-4.19 -6.22L-2.75 -4.76z" fill="url(#gg)" stroke="#4a47a6" stroke-width=".8" stroke-linejoin="round"/><circle r="2.100" fill="#fff" stroke="#4a47a6" stroke-width=".9"/></g></svg>
<div class="t" style="left:48px;top:562px">SliderControl</div>
<svg style="left:16px;top:561px" width="16" height="16" viewBox="0 0 16 16" ><g transform="translate(7.800,7.300)"><path d="M-1.42 -5.31L-1.43 -7.36L1.43 -7.36L1.42 -5.31L2.75 -4.76L4.19 -6.22L6.22 -4.19L4.76 -2.75L5.31 -1.42L7.36 -1.43L7.36 1.43L5.31 1.42L4.76 2.75L6.22 4.19L4.19 6.22L2.75 4.76L1.42 5.31L1.43 7.36L-1.43 7.36L-1.42 5.31L-2.75 4.76L-4.19 6.22L-6.22 4.19L-4.76 2.75L-5.31 1.42L-7.36 1.43L-7.36 -1.43L-5.31 -1.42L-4.76 -2.75L-6.22 -4.19L-4.19 -6.22L-2.75 -4.76z" fill="url(#gg)" stroke="#4a47a6" stroke-width=".8" stroke-linejoin="round"/><circle r="2.100" fill="#fff" stroke="#4a47a6" stroke-width=".9"/></g></svg>
<div class="t" style="left:48px;top:583px">HueRicker</div>
<svg style="left:16px;top:582px" width="16" height="16" viewBox="0 0 16 16" ><g transform="translate(7.800,7.300)"><path d="M-1.42 -5.31L-1.43 -7.36L1.43 -7.36L1.42 -5.31L2.75 -4.76L4.19 -6.22L6.22 -4.19L4.76 -2.75L5.31 -1.42L7.36 -1.43L7.36 1.43L5.31 1.42L4.76 2.75L6.22 4.19L4.19 6.22L2.75 4.76L1.42 5.31L1.43 7.36L-1.43 7.36L-1.42 5.31L-2.75 4.76L-4.19 6.22L-6.22 4.19L-4.76 2.75L-5.31 1.42L-7.36 1.43L-7.36 -1.43L-5.31 -1.42L-4.76 -2.75L-6.22 -4.19L-4.19 -6.22L-2.75 -4.76z" fill="url(#gg)" stroke="#4a47a6" stroke-width=".8" stroke-linejoin="round"/><circle r="2.100" fill="#fff" stroke="#4a47a6" stroke-width=".9"/></g></svg>
</div>
<svg style="left:472px;top:148px" width="9" height="9" viewBox="0 0 9 9" ><rect x=".5" y=".5" width="8" height="8" rx="1" fill="url(#pmg)" stroke="#8a98ac"/><path d="M2 4.500h5" stroke="#000"/><path d="M4.500 2v5" stroke="#000"/></svg>
<svg style="left:472px;top:164px" width="9" height="9" viewBox="0 0 9 9" ><rect x=".5" y=".5" width="8" height="8" rx="1" fill="url(#pmg)" stroke="#8a98ac"/><path d="M2 4.500h5" stroke="#000"/></svg>
<svg style="left:671px;top:132px" width="8" height="4" viewBox="0 0 8 4" ><path d="M0 0h8L4 4z" fill="#dfe6f2"/></svg><svg style="left:686px;top:129px" width="10" height="10" viewBox="0 0 10 10" ><rect x=".8" y=".8" width="8.400" height="8.400" fill="none" stroke="#dfe6f2" stroke-width="1.300"/><rect x=".5" y=".5" width="9" height="2.200" fill="#dfe6f2"/></svg><svg style="left:701px;top:129px" width="10" height="10" viewBox="0 0 10 10" ><path d="M.8 .8l8.400 8.400M9.200 .8L.8 9.200" stroke="#dfe6f2" stroke-width="1.500"/></svg>
<svg style="left:701px;top:115px" width="8" height="4" viewBox="0 0 8 4" ><path d="M0 0h8L4 4z" fill="#dfe6f2"/></svg>
<div class="a" style="left:699px;top:143px;width:16px;height:588px;background:#f3f1ea"></div>
<div class="a" style="left:699px;top:161px;width:15px;height:176px;background:linear-gradient(90deg,#c8d6fb,#b7caf5 70%,#a9bcf0);border:1px solid #fff;border-radius:2px;box-shadow:0 0 0 1px #b4c8f6 inset"></div>
<div class="a" style="left:699px;top:145px;width:15px;height:15px;border:1px solid #fff;border-radius:2px;background:linear-gradient(90deg,#cfdcfc,#b9ccf6 70%,#a9bcf0);box-shadow:0 0 0 1px #b4c8f6 inset"><svg style="left:-1px;top:-1px" width="15" height="15"><path d="M3.500 9l4-4 4 4" fill="none" stroke="#4d6185" stroke-width="2"/></svg></div>
<div class="a" style="left:699px;top:715px;width:15px;height:15px;border:1px solid #fff;border-radius:2px;background:linear-gradient(90deg,#cfdcfc,#b9ccf6 70%,#a9bcf0);box-shadow:0 0 0 1px #b4c8f6 inset"><svg style="left:-1px;top:-1px" width="15" height="15"><path d="M3.500 5.500l4 4 4-4" fill="none" stroke="#4d6185" stroke-width="2"/></svg></div>
<svg style="left:703px;top:245px" width="8" height="9"><path d="M0 .5h7M0 2.500h7M0 4.500h7M0 6.500h7" stroke="#8ea4dc"/><path d="M1 1.500h7M1 3.500h7M1 5.500h7M1 7.500h7" stroke="#eef3ff"/></svg>
<div class="cap" style="left:721px;top:105px;width:276px;height:19px;border-radius:3px 3px 0 0"></div><div class="t" style="left:723px;top:107px;color:#fff">方案總管</div>
<div class="a" style="left:721px;top:123px;width:276px;height:27px;background:#bcc7d8"></div>
<div class="a" style="left:721px;top:150px;width:276px;height:540px;background:#fff"></div>
<svg style="left:727px;top:128px" width="17" height="16" viewBox="0 0 17 16" ><path d="M.5 1.500h5l1.500 1.500H11V11H.5z" fill="#d8c890" stroke="#8a8a7a"/><rect x="4.500" y="6.500" width="12" height="9" fill="#fff" stroke="#6a7a9a"/><rect x="5" y="7" width="11" height="2" fill="#8a9ab8"/><path d="M6.500 11.500h3M6.500 13.500h3M11 11.500h4M11 13.500h4" stroke="#6a7a9a"/></svg><div class="sep" style="left:750px;top:127px;height:18px"></div><svg style="left:756px;top:128px" width="17" height="16" viewBox="0 0 17 16" ><path d="M.5 .5h8V10H.5z" fill="#fff" stroke="#555" stroke-dasharray="1 1"/><path d="M5.500 3.500h7l3 3V15.500H5.500z" fill="#f8f0d0" stroke="#8a7a3a"/><path d="M3.500 7.500h6l2 2V15.500H3.500z" fill="#fff" stroke="#3a5a9a"/><path d="M5 11h4M5 13h4" stroke="#3a6ad0"/></svg><div class="sep" style="left:779px;top:127px;height:18px"></div><svg style="left:787px;top:129px" width="15" height="14" viewBox="0 0 15 14" ><rect x=".5" y=".5" width="13" height="13" fill="#fff" stroke="#555"/><path d="M3 3.500h5M5 5.500h6M5 7.500h4M3 9.500h6" stroke="#3a5ab0"/><rect x="1" y="1" width="12" height="1.500" fill="#ddd"/></svg><svg style="left:808px;top:128px" width="17" height="16" viewBox="0 0 17 16" ><rect x=".5" y="1.500" width="15" height="13" fill="#fff" stroke="#4a6aa8"/><rect x="1" y="2" width="14" height="2.500" fill="#5a8ae0"/><path d="M3 7.500h4M3 10.500h4M9 7.500h4M9 10.500h4" stroke="#6a7a9a" stroke-width="1.600"/></svg><svg style="left:830px;top:128px" width="17" height="17" viewBox="0 0 17 17" ><rect x="5.500" y=".5" width="6" height="4" fill="#cfe0f8" stroke="#3a6ab8"/><rect x=".5" y="7.500" width="5" height="4" fill="#cfe0f8" stroke="#3a6ab8"/><path d="M8.500 5v2H3v1" fill="none" stroke="#3a6ab8"/><circle cx="10.500" cy="10" r="3.300" fill="#e8f0fa" stroke="#7a8aa8" stroke-width="1.200"/><path d="M13 12.500l3 3" stroke="#c89030" stroke-width="2"/></svg>
<svg style="left:953px;top:112px" width="8" height="4" viewBox="0 0 8 4" ><path d="M0 0h8L4 4z" fill="#dfe6f2"/></svg><svg style="left:969px;top:108px" width="8" height="12" viewBox="0 0 8 12" ><path d="M2 .7h4.500V6M2 .7V6M.3 6.500h7.400M4 6.500V12" fill="none" stroke="#dfe6f2" stroke-width="1.200"/><path d="M5.500 1v5" stroke="#dfe6f2" stroke-width="1.400"/></svg><svg style="left:983px;top:109px" width="10" height="10" viewBox="0 0 10 10" ><path d="M.8 .8l8.400 8.400M9.200 .8L.8 9.200" stroke="#dfe6f2" stroke-width="1.500"/></svg>
<div class="a" style="left:734px;top:167px;width:1px;height:4px;background:repeating-linear-gradient(#9a9a9a 0 1px,transparent 1px 2px)"></div>
<div class="a" style="left:739px;top:175px;width:6px;height:1px;background:repeating-linear-gradient(90deg,#9a9a9a 0 1px,transparent 1px 2px)"></div>
<div class="a" style="left:752px;top:183px;width:1px;height:216px;background:repeating-linear-gradient(#9a9a9a 0 1px,transparent 1px 2px)"></div>
<div class="a" style="left:758px;top:191px;width:6px;height:1px;background:repeating-linear-gradient(90deg,#9a9a9a 0 1px,transparent 1px 2px)"></div>
<div class="a" style="left:758px;top:271px;width:6px;height:1px;background:repeating-linear-gradient(90deg,#9a9a9a 0 1px,transparent 1px 2px)"></div>
<div class="a" style="left:758px;top:351px;width:6px;height:1px;background:repeating-linear-gradient(90deg,#9a9a9a 0 1px,transparent 1px 2px)"></div>
<div class="a" style="left:752px;top:255px;width:13px;height:1px;background:repeating-linear-gradient(90deg,#9a9a9a 0 1px,transparent 1px 2px)"></div>
<div class="a" style="left:752px;top:399px;width:13px;height:1px;background:repeating-linear-gradient(90deg,#9a9a9a 0 1px,transparent 1px 2px)"></div>
<div class="a" style="left:771px;top:199px;width:1px;height:40px;background:repeating-linear-gradient(#9a9a9a 0 1px,transparent 1px 2px)"></div>
<div class="a" style="left:771px;top:279px;width:1px;height:56px;background:repeating-linear-gradient(#9a9a9a 0 1px,transparent 1px 2px)"></div>
<div class="a" style="left:771px;top:359px;width:1px;height:24px;background:repeating-linear-gradient(#9a9a9a 0 1px,transparent 1px 2px)"></div>
<div class="a" style="left:771px;top:207px;width:13px;height:1px;background:repeating-linear-gradient(90deg,#9a9a9a 0 1px,transparent 1px 2px)"></div>
<div class="a" style="left:771px;top:223px;width:13px;height:1px;background:repeating-linear-gradient(90deg,#9a9a9a 0 1px,transparent 1px 2px)"></div>
<div class="a" style="left:771px;top:239px;width:13px;height:1px;background:repeating-linear-gradient(90deg,#9a9a9a 0 1px,transparent 1px 2px)"></div>
<div class="a" style="left:771px;top:319px;width:13px;height:1px;background:repeating-linear-gradient(90deg,#9a9a9a 0 1px,transparent 1px 2px)"></div>
<div class="a" style="left:771px;top:335px;width:13px;height:1px;background:repeating-linear-gradient(90deg,#9a9a9a 0 1px,transparent 1px 2px)"></div>
<div class="a" style="left:771px;top:367px;width:13px;height:1px;background:repeating-linear-gradient(90deg,#9a9a9a 0 1px,transparent 1px 2px)"></div>
<div class="a" style="left:771px;top:383px;width:13px;height:1px;background:repeating-linear-gradient(90deg,#9a9a9a 0 1px,transparent 1px 2px)"></div>
<div class="a" style="left:777px;top:287px;width:6px;height:1px;background:repeating-linear-gradient(90deg,#9a9a9a 0 1px,transparent 1px 2px)"></div>
<div class="a" style="left:790px;top:295px;width:1px;height:8px;background:repeating-linear-gradient(#9a9a9a 0 1px,transparent 1px 2px)"></div>
<div class="a" style="left:790px;top:303px;width:13px;height:1px;background:repeating-linear-gradient(90deg,#9a9a9a 0 1px,transparent 1px 2px)"></div>
<div class="a" style="left:770px;top:167px;width:154px;height:16px;background:#ece9d8"></div>
<svg style="left:731px;top:151px" width="17" height="16" viewBox="0 0 17 16" ><rect x=".5" y=".5" width="16" height="14" fill="#fff" stroke="#7a9ad8"/><rect x="1" y="1" width="15" height="2.500" fill="#5a8ae0"/><path d="M9 12C7.500 9.500 5.500 9.300 4.300 10 3 10.800 3 13.200 4.300 14 5.500 14.700 7.500 14.500 9 12z" fill="none" stroke="#3a7ae0" stroke-width="1.600"/><path d="M9 12c1.500-2.500 3.500-2.700 4.700-2 1.300.8 1.300 3.200 0 4-1.200.7-3.200.5-4.700-2z" fill="none" stroke="#8a4ac8" stroke-width="1.600"/></svg>
<div class="t" style="left:752px;top:152px;word-spacing:.3px">方案 &#x27;06_CLI_tcpsocket_rw_car&#x27; (1 專案)</div>
<svg style="left:752px;top:167px" width="17" height="16" viewBox="0 0 17 16" ><rect x="2.500" y=".5" width="13" height="12" fill="#fff" stroke="#3a5a9a"/><rect x="3" y="1" width="12" height="2.500" fill="#2c5cc0"/><path d="M7 5v4M5 7h4M11 4.500v3M9.500 6h3" stroke="#e0a820" stroke-width="1.400"/><circle cx="7" cy="12.500" r="3.300" fill="#3a9a8a" stroke="#1a5a5a" stroke-width=".8"/><path d="M4.500 12c1-1 2 1 2.500 0s1.500-.5 2.500-.5" fill="none" stroke="#c8f0d8" stroke-width=".8"/><path d="M2 11l-1.500 1.500L2 14M12 11l1.500 1.500L12 14" fill="none" stroke="#111" stroke-width=".9"/></svg>
<div class="t" style="left:772px;top:168px;font-weight:bold;letter-spacing:.35px">06_CLI_tcpsocket_rw_car</div>
<svg style="left:729px;top:171px" width="9" height="9" viewBox="0 0 9 9" ><rect x=".5" y=".5" width="8" height="8" rx="1" fill="url(#pmg)" stroke="#8a98ac"/><path d="M2 4.500h5" stroke="#000"/></svg>
<svg style="left:770px;top:183px" width="17" height="16" viewBox="0 0 17 16" ><path d="M.5 2.500h5l1.500 1.500H13.500V13.500H.5z" fill="#e0b040" stroke="#a07818"/><path d="M3 6.500H16.500l-3 7H.5z" fill="#ffd968" stroke="#a07818"/></svg>
<div class="t" style="left:791px;top:184px">原始程式檔</div>
<svg style="left:748px;top:187px" width="9" height="9" viewBox="0 0 9 9" ><rect x=".5" y=".5" width="8" height="8" rx="1" fill="url(#pmg)" stroke="#8a98ac"/><path d="M2 4.500h5" stroke="#000"/></svg>
<svg style="left:790px;top:199px" width="17" height="16" viewBox="0 0 17 16" ><path d="M3.500 .5h8l3.500 3.500V15.500H3.500z" fill="#f2f6fc" stroke="#8aa0c8"/><path d="M11.500 .5V4h3.500" fill="#dce6f4" stroke="#8aa0c8"/><path d="M4 10h10.500v5H4z" fill="#dde8f6"/><path d="M6.800 5.200C5.800 3.600 2.600 3.500 1.500 5.400.600 7 .800 9 2 10c1.300 1.100 3.800 .9 4.800-.7" fill="none" stroke="#1a5ab0" stroke-width="1.800"/><path d="M8 7.500h3M9.500 6v3M12 7.500h3M13.500 6v3" stroke="#1a5ab0" stroke-width="1"/></svg>
<div class="t" style="left:809px;top:200px">06_CLI_tcpsocket_rw_car.cpp</div>
<svg style="left:790px;top:215px" width="17" height="16" viewBox="0 0 17 16" ><path d="M3.500 .5h8l3.500 3.500V15.500H3.500z" fill="#f2f6fc" stroke="#8aa0c8"/><path d="M11.500 .5V4h3.500" fill="#dce6f4" stroke="#8aa0c8"/><path d="M4 10h10.500v5H4z" fill="#dde8f6"/><path d="M6.800 5.200C5.800 3.600 2.600 3.500 1.500 5.400.600 7 .800 9 2 10c1.300 1.100 3.800 .9 4.800-.7" fill="none" stroke="#1a5ab0" stroke-width="1.800"/><path d="M8 7.500h3M9.500 6v3M12 7.500h3M13.500 6v3" stroke="#1a5ab0" stroke-width="1"/></svg>
<div class="t" style="left:809px;top:216px">AssemblyInfo.cpp</div>
<svg style="left:790px;top:231px" width="17" height="16" viewBox="0 0 17 16" ><path d="M3.500 .5h8l3.500 3.500V15.500H3.500z" fill="#f2f6fc" stroke="#8aa0c8"/><path d="M11.500 .5V4h3.500" fill="#dce6f4" stroke="#8aa0c8"/><path d="M4 10h10.500v5H4z" fill="#dde8f6"/><path d="M6.800 5.200C5.800 3.600 2.600 3.500 1.500 5.400.600 7 .800 9 2 10c1.300 1.100 3.800 .9 4.800-.7" fill="none" stroke="#1a5ab0" stroke-width="1.800"/><path d="M8 7.500h3M9.500 6v3M12 7.500h3M13.500 6v3" stroke="#1a5ab0" stroke-width="1"/></svg>
<div class="t" style="left:809px;top:232px">stdafx.cpp</div>
<svg style="left:770px;top:247px" width="17" height="16" viewBox="0 0 17 16" ><path d="M.5 2.500h5l1.500 1.500H14.500V13.500H.5z" fill="#f0c850" stroke="#a07818"/><rect x="1" y="5" width="13" height="8" fill="#ffe080"/><rect x=".5" y="8.500" width="7" height="7" fill="#fff" stroke="#111"/><path d="M2.500 13.500l3-3M3 10.500h2.500V13" fill="none" stroke="#111" stroke-width="1.100"/></svg>
<div class="t" style="left:791px;top:248px">外部相依性</div>
<svg style="left:770px;top:263px" width="17" height="16" viewBox="0 0 17 16" ><path d="M.5 2.500h5l1.500 1.500H13.500V13.500H.5z" fill="#e0b040" stroke="#a07818"/><path d="M3 6.500H16.500l-3 7H.5z" fill="#ffd968" stroke="#a07818"/></svg>
<div class="t" style="left:791px;top:264px">標頭檔</div>
<svg style="left:748px;top:267px" width="9" height="9" viewBox="0 0 9 9" ><rect x=".5" y=".5" width="8" height="8" rx="1" fill="url(#pmg)" stroke="#8a98ac"/><path d="M2 4.500h5" stroke="#000"/></svg>
<svg style="left:790px;top:279px" width="17" height="16" viewBox="0 0 17 16" ><rect x=".5" y="1.500" width="15" height="13" fill="#f4f6fa" stroke="#8a96b0"/><rect x="1" y="2" width="14" height="2.500" fill="#a8c0e8"/><rect x="3.500" y="6.500" width="3" height="2" fill="#fff" stroke="#8a96b0"/><rect x="3.500" y="10.500" width="3" height="2" fill="#fff" stroke="#8a96b0"/><rect x="8.500" y="6.500" width="5" height="2" fill="#fff" stroke="#8a96b0"/><rect x="8.500" y="10.500" width="5" height="2" fill="#fff" stroke="#8a96b0"/></svg>
<div class="t" style="left:809px;top:280px">Form1.h</div>
<svg style="left:768px;top:283px" width="9" height="9" viewBox="0 0 9 9" ><rect x=".5" y=".5" width="8" height="8" rx="1" fill="url(#pmg)" stroke="#8a98ac"/><path d="M2 4.500h5" stroke="#000"/></svg>
<svg style="left:808px;top:295px" width="17" height="16" viewBox="0 0 17 16" ><rect x="2.500" y="1.500" width="10" height="8" fill="#f4f6fa" stroke="#6a86c0"/><rect x="3" y="2" width="9" height="2" fill="#5a88d8"/><rect x="7.500" y="6.500" width="7" height="7" fill="#e4ecd8" stroke="#7a8a7a"/><path d="M8 13l2.500-3 1.500 1.500 2-2V13z" fill="#4a9a4a"/><circle cx="12.500" cy="8.300" r="1" fill="#e07030"/><path d="M.5 9.500h5.500v5H.5zM.5 11.500H6M.5 13.500H6M2.500 9.500v5M4.500 9.500v5" stroke="#6a7080" stroke-width=".8" fill="#fff"/></svg>
<div class="t" style="left:829px;top:296px">Form1.resX</div>
<svg style="left:790px;top:311px" width="17" height="16" viewBox="0 0 17 16" ><path d="M3.500 .5h8l3.500 3.500V15.500H3.500z" fill="#f2f6fc" stroke="#8aa0c8"/><path d="M11.500 .5V4h3.500" fill="#dce6f4" stroke="#8aa0c8"/><path d="M4 10h10.500v5H4z" fill="#dde8f6"/><text x="9.300" y="12" font-family="Liberation Sans,sans-serif" font-size="10" font-weight="bold" text-anchor="middle" fill="#1a5ab0" letter-spacing="0">h</text></svg>
<div class="t" style="left:809px;top:312px">resource.h</div>
<svg style="left:790px;top:327px" width="17" height="16" viewBox="0 0 17 16" ><path d="M3.500 .5h8l3.500 3.500V15.500H3.500z" fill="#f2f6fc" stroke="#8aa0c8"/><path d="M11.500 .5V4h3.500" fill="#dce6f4" stroke="#8aa0c8"/><path d="M4 10h10.500v5H4z" fill="#dde8f6"/><text x="9.300" y="12" font-family="Liberation Sans,sans-serif" font-size="10" font-weight="bold" text-anchor="middle" fill="#1a5ab0" letter-spacing="0">h</text></svg>
<div class="t" style="left:809px;top:328px">stdafx.h</div>
<svg style="left:770px;top:343px" width="17" height="16" viewBox="0 0 17 16" ><path d="M.5 2.500h5l1.500 1.500H13.500V13.500H.5z" fill="#e0b040" stroke="#a07818"/><path d="M3 6.500H16.500l-3 7H.5z" fill="#ffd968" stroke="#a07818"/></svg>
<div class="t" style="left:791px;top:344px">資源檔</div>
<svg style="left:748px;top:347px" width="9" height="9" viewBox="0 0 9 9" ><rect x=".5" y=".5" width="8" height="8" rx="1" fill="url(#pmg)" stroke="#8a98ac"/><path d="M2 4.500h5" stroke="#000"/></svg>
<svg style="left:790px;top:359px" width="17" height="16" viewBox="0 0 17 16" ><path d="M.5 .5h10l3.500 3.500V15.500H.5z" fill="#eef0f6" stroke="#6a7aa0"/><path d="M10.500 .5V4h3.500" fill="#dfe6f2" stroke="#6a7aa0"/><path d="M3 5h2v2H3zM6 5h2v2H6zM9 5h2v2H9zM3 8h2v2H3zM6 8h2v2H6zM9 8h2v2H9zM3 11h2v2H3zM6 11h2v2H6zM9 11h2v2H9z" fill="#6a7aa8"/></svg>
<div class="t" style="left:809px;top:360px">app.ico</div>
<svg style="left:790px;top:375px" width="17" height="16" viewBox="0 0 17 16" ><rect x="2.500" y="1.500" width="10" height="8" fill="#f4f6fa" stroke="#6a86c0"/><rect x="3" y="2" width="9" height="2" fill="#5a88d8"/><rect x="7.500" y="6.500" width="7" height="7" fill="#e4ecd8" stroke="#7a8a7a"/><path d="M8 13l2.500-3 1.500 1.500 2-2V13z" fill="#4a9a4a"/><circle cx="12.500" cy="8.300" r="1" fill="#e07030"/><path d="M.5 9.500h5.500v5H.5zM.5 11.500H6M.5 13.500H6M2.500 9.500v5M4.500 9.500v5" stroke="#6a7080" stroke-width=".8" fill="#fff"/></svg>
<div class="t" style="left:809px;top:376px">app.rc</div>
<svg style="left:771px;top:391px" width="17" height="16" viewBox="0 0 17 16" ><path d="M1.500 2.500h11V15.500H1.500z" fill="#fff" stroke="#7a7a8a"/><path d="M2 2.500h10" stroke="#c8a040" stroke-width="2.500" stroke-dasharray="1 1"/><path d="M3.500 6.500h7M3.500 8.500h7M3.500 10.500h7M3.500 12.500h5" stroke="#6a7a9a"/></svg>
<div class="t" style="left:790px;top:392px">ReadMe.txt</div>
<div class="a" style="left:721px;top:690px;width:78px;height:20px;background:#fff;border-radius:0 0 3px 3px"></div>
<div class="t" style="left:745px;top:693px">方案總管</div><div class="t" style="left:823px;top:693px;color:#fff">類別檢視</div>
<div class="a" style="left:1003px;top:105px;width:21px;height:50px;background:#3d5277;border-radius:3px 0 0 3px"></div>
<svg style="left:1007px;top:108px" width="15" height="15" viewBox="0 0 15 15" ><rect x=".5" y=".5" width="9" height="11" fill="#fff" stroke="#6a7a9a"/><path d="M3.500 1v10M6.500 1v10M1 4.500h8M1 7.500h8" stroke="#8a9ab8"/><path d="M7 6l3-2 4 4v5l-3 2-2-1-2-4z" fill="#f0c020" stroke="#8a6a10" stroke-width=".8"/><rect x="9" y="13" width="5" height="2" fill="#3a9a3a"/></svg>
<div class="t" style="left:1006px;top:128px;color:#fff;line-height:12px;transform:rotate(90deg);transform-origin:0 0;margin-left:14px">屬性</div>
<svg style="left:101px;top:111px" width="9" height="9" viewBox="0 0 9 9" ><path d="M.8 .8l7.400 7.400M8.200 .8L.8 8.200" stroke="#7a6a40" stroke-width="1.600"/></svg>
<svg style="left:726px;top:692px" width="17" height="17" viewBox="0 0 17 17" ><rect x="3.500" y=".5" width="12" height="10" fill="#fff" stroke="#5b78b4"/><rect x="4" y="1" width="11" height="2.500" fill="#3f6fd0"/><path d="M.5 4.500h4l1 1h4v5h-9z" fill="#f0c850" stroke="#a07818"/><circle cx="10.500" cy="9.500" r="3.300" fill="#cfe4f8" stroke="#6a8ab8" stroke-width="1.200"/><path d="M13 12l3 3.500" stroke="#c89030" stroke-width="2"/></svg>
<svg style="left:804px;top:692px" width="17" height="17" viewBox="0 0 17 17" ><rect x=".5" y="2.500" width="14" height="9" fill="#e8ecf4" stroke="#8a96b0"/><path d="M2 7l4-4 3 3-4 4z" fill="#f0c020" stroke="#8a6a10" stroke-width=".7"/><path d="M9 8l3-3 3 3-3 3z" fill="#e060d8" stroke="#8a3a88" stroke-width=".7"/><path d="M9 14l3-2.500 3 2.500-3 2z" fill="#3a7ae0"/></svg>
<svg style="left:862px;top:719px" width="14" height="15" viewBox="0 0 14 15" ><rect x="5.500" y="5.500" width="8" height="9" fill="none" stroke="#dfe6f2" stroke-dasharray="1 1"/><path d="M5 2.500h8M13 2.500l-2-2M13 2.500l-2 2M2.500 5v8M2.500 13l-2-2M2.500 13l2-2M0 14.500h5" fill="none" stroke="#dfe6f2"/></svg>
<div class="a" style="left:0px;top:563px;width:467px;height:150px;background:#35496a;border-radius:4px"></div>
<div class="cap" style="left:4px;top:567px;width:459px;height:19px"></div><div class="t" style="left:5px;top:569px;color:#fff">錯誤清單</div>
<div class="a" style="left:4px;top:586px;width:459px;height:26px;background:#bcc7d8"></div>
<div class="a" style="left:4px;top:612px;width:459px;height:20px;background:#ebeadb;border-bottom:2px solid #d6d2c2"></div>
<div class="a" style="left:4px;top:632px;width:459px;height:77px;background:#fff"></div>
<div class="a" style="left:8px;top:588px;width:76px;height:22px;background:#ffefbb;border:1px solid #e5c365"></div>
<div class="a" style="left:91px;top:588px;width:76px;height:22px;background:#ffefbb;border:1px solid #e5c365"></div>
<div class="sep" style="left:87px;top:590px;height:18px"></div><div class="sep" style="left:170px;top:590px;height:18px"></div>
<svg style="left:11px;top:591px" width="16" height="16" viewBox="0 0 16 16" ><defs><radialGradient id="rg" cx=".35" cy=".3" r=".8"><stop offset="0" stop-color="#f08a70"/><stop offset=".6" stop-color="#d03a20"/><stop offset="1" stop-color="#a02010"/></radialGradient></defs><circle cx="8" cy="8" r="7.500" fill="url(#rg)"/><path d="M5 5l6 6M11 5l-6 6" stroke="#fff" stroke-width="2.200"/></svg>
<svg style="left:94px;top:591px" width="17" height="16" viewBox="0 0 17 16" ><path d="M8.500 .8L16.300 15.200H.7z" fill="#f8e020" stroke="#b8a000" stroke-width="1"/><path d="M8.500 5v5.500" stroke="#111" stroke-width="2"/><circle cx="8.500" cy="12.800" r="1.200" fill="#111"/></svg>
<svg style="left:177px;top:591px" width="16" height="16" viewBox="0 0 16 16" ><circle cx="8" cy="8" r="7" fill="#f4f8ff" stroke="#8a9ab8" stroke-width="1.200"/><circle cx="8" cy="4.500" r="1.300" fill="#1a4aa8"/><path d="M6.500 7h2.300v5M6.300 12.200h4" stroke="#1a4aa8" stroke-width="1.600" fill="none"/></svg>
<div class="t" style="left:30px;top:592px"><span style="font-family:'Liberation Sans',sans-serif;font-size:12px;letter-spacing:0">0</span><span style="letter-spacing:0;margin-left:3px">項錯誤</span></div>
<div class="t" style="left:113px;top:592px"><span style="font-family:'Liberation Sans',sans-serif;font-size:12px;letter-spacing:0">0</span><span style="letter-spacing:0;margin-left:3px">項警告</span></div>
<div class="t" style="left:196px;top:592px"><span style="font-family:'Liberation Sans',sans-serif;font-size:12px;letter-spacing:0">0</span><span style="letter-spacing:0;margin-left:3px">項訊息</span></div>
<div class="t" style="left:49px;top:615px">描述</div><div class="t" style="left:347px;top:615px">檔案</div>
<div class="a" style="left:20px;top:615px;width:1px;height:13px;background:#c5c2b2;box-shadow:1px 0 0 #fff"></div>
<div class="a" style="left:20px;top:632px;width:1px;height:77px;background:#ececec"></div>
<div class="a" style="left:39px;top:615px;width:1px;height:13px;background:#c5c2b2;box-shadow:1px 0 0 #fff"></div>
<div class="a" style="left:39px;top:632px;width:1px;height:77px;background:#ececec"></div>
<div class="a" style="left:334px;top:615px;width:1px;height:13px;background:#c5c2b2;box-shadow:1px 0 0 #fff"></div>
<div class="a" style="left:334px;top:632px;width:1px;height:77px;background:#ececec"></div>
<svg style="left:379px;top:619px" width="10" height="5" viewBox="0 0 10 5" ><path d="M0 5L5 0l5 5z" fill="#b8b4a2"/></svg>
<div class="a" style="left:4px;top:648px;width:459px;height:1px;background:#ececec"></div>
<div class="a" style="left:4px;top:665px;width:459px;height:1px;background:#ececec"></div>
<div class="a" style="left:4px;top:682px;width:459px;height:1px;background:#ececec"></div>
<div class="a" style="left:4px;top:699px;width:459px;height:1px;background:#ececec"></div>
<div class="t" style="left:4px;top:720px;color:#fff">就緒</div>
<div class="t" style="left:718px;top:720px;color:#fff">15 , 15</div>
<div class="t" style="left:877px;top:720px;color:#fff">329 x 300</div>
<div class="a" style="left:910px;top:721px;width:113px;height:17px;background:#ffffe1;border:1px solid #000;border-bottom:0"></div><div class="t" style="left:913px;top:723px">Sunday, June 02, 2013</div>
</body></html>
